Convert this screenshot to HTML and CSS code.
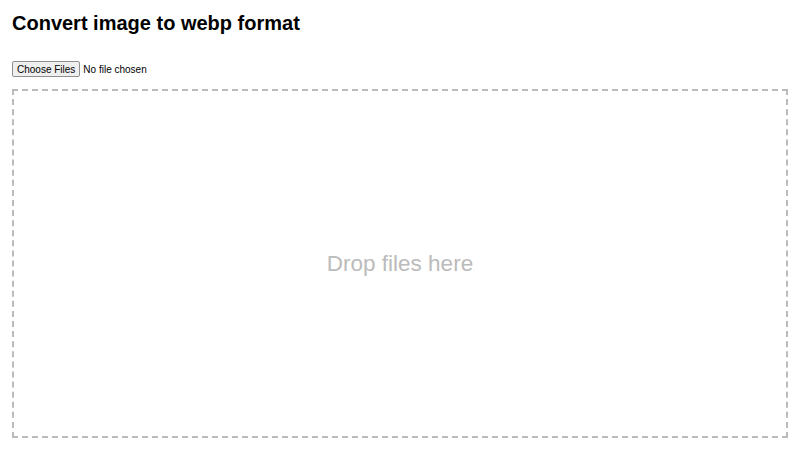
FILE: index.html
```html
<!DOCTYPE html>
<html>
<head>
<meta charset="utf-8">
<link rel="stylesheet" href="styles.css">
</head>
<body>
<h1 class="title">Convert image to webp format</h1>
<input class="picker" type="file" multiple>
<div class="dropzone">Drop files here</div>
</body>
</html>
```
FILE: styles.css
```css
html, body { margin: 0; padding: 0; }
body {
  font-family: "Liberation Sans", Arial, sans-serif;
  padding: 12px;
  box-sizing: border-box;
  height: 450px;
  display: flex;
  flex-direction: column;
}
.title {
  font-size: 20px;
  font-weight: bold;
  margin: 0 0 26px 0;
  line-height: 23px;
}
.picker {
  font-family: "Liberation Sans", Arial, sans-serif;
  font-size: 10px;
  align-self: flex-start;
  margin: 0 0 12px 0;
  height: 16px;
  line-height: 12px;
}
.picker::file-selector-button {
  font-family: "Liberation Sans", Arial, sans-serif;
  font-size: 10px;
  padding: 1px 4px;
  border: 1px solid #8f8f8f;
  border-radius: 2px;
  background: #efefef;
  color: #000;
  margin-right: 3px;
  height: 16px;
}
.dropzone {
  flex: 1;
  border: 2px dashed #bbb;
  display: flex;
  align-items: center;
  justify-content: center;
  font-size: 22.5px;
  color: #bbb;
}
```
